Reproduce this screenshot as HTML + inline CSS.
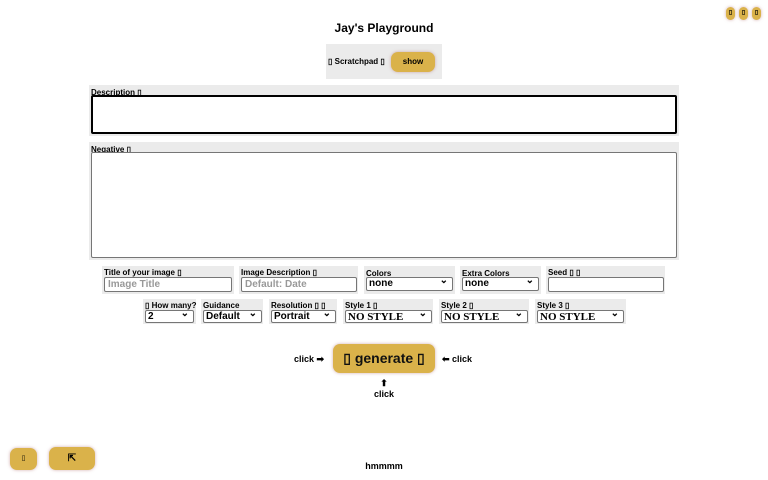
<!DOCTYPE html>
<html><head><meta charset="utf-8"><style>
*{box-sizing:border-box;margin:0;padding:0}
body{width:768px;height:480px;background:#fff;font-family:"Liberation Sans",sans-serif;color:#000;position:relative;overflow:hidden}
.a{position:absolute}
.g{background:#ebebeb}
.btn{background:#dab24a;border-radius:7px;box-shadow:0 0 3px rgba(180,120,120,.6);text-align:center;font-weight:bold}
.lbl{font-size:8px;font-weight:bold;position:absolute;left:2px;top:2px;white-space:nowrap}
.inp{position:absolute;background:#fff;border:1px solid #767676;border-radius:2px;font-size:10px;font-weight:bold;color:#999;padding-left:3px;line-height:13px}
.sel{position:absolute;background:#fff;border:1px solid #767676;border-radius:2px;font-size:10px;font-weight:bold;padding-left:2px;line-height:12px}
.sel:after{content:"⌄";position:absolute;right:4px;top:-3px;font-size:10px}
.ser{font-family:"Liberation Serif",serif;font-size:11px}
</style></head><body>
<div class="a" style="left:0;width:768px;top:21px;text-align:center;font-size:12px;font-weight:bold">Jay's Playground</div>
<div class="a btn" style="left:726px;top:7px;width:9px;height:13px;font-size:6px;line-height:13px;border-radius:5px">▯</div>
<div class="a btn" style="left:739px;top:7px;width:9px;height:13px;font-size:6px;line-height:13px;border-radius:5px">▯</div>
<div class="a btn" style="left:752px;top:7px;width:9px;height:13px;font-size:6px;line-height:13px;border-radius:5px">▯</div>
<div class="a g" style="left:326px;top:44px;width:116px;height:35px"></div>
<div class="a" style="left:328px;top:57px;font-size:8px;font-weight:bold">▯ Scratchpad ▯</div>
<div class="a btn" style="left:391px;top:52px;width:44px;height:20px;font-size:8px;line-height:20px">show</div>

<div class="a g" style="left:89px;top:85px;width:590px;height:51px"><span class="lbl" style="top:3px">Description ▯</span></div>
<div class="a" style="left:91px;top:95px;width:586px;height:39px;background:#fff;border:2px solid #000;border-radius:2px"></div>
<div class="a g" style="left:89px;top:142px;width:590px;height:118px"><span class="lbl" style="top:3px">Negative ▯</span></div>
<div class="a" style="left:91px;top:152px;width:586px;height:106px;background:#fff;border:1px solid #767676;border-radius:2px"></div>

<div class="a g" style="left:102px;top:266px;width:132px;height:28px"><span class="lbl">Title of your image ▯</span></div>
<div class="inp" style="left:104px;top:277px;width:128px;height:15px">Image Title</div>
<div class="a g" style="left:239px;top:266px;width:119px;height:28px"><span class="lbl">Image Description ▯</span></div>
<div class="inp" style="left:241px;top:277px;width:116px;height:15px">Default: Date</div>
<div class="a g" style="left:364px;top:266px;width:91px;height:28px"><span class="lbl" style="top:3px">Colors</span></div>
<div class="sel" style="left:366px;top:277px;width:87px;height:14px">none</div>
<div class="a g" style="left:460px;top:266px;width:81px;height:28px"><span class="lbl" style="top:3px">Extra Colors</span></div>
<div class="sel" style="left:462px;top:277px;width:77px;height:14px">none</div>
<div class="a g" style="left:546px;top:266px;width:119px;height:28px"><span class="lbl">Seed ▯ ▯</span></div>
<div class="inp" style="left:548px;top:277px;width:116px;height:15px"></div>

<div class="a g" style="left:143px;top:299px;width:53px;height:25px"><span class="lbl">▯ How many?</span></div>
<div class="sel" style="left:145px;top:310px;width:49px;height:13px">2</div>
<div class="a g" style="left:201px;top:299px;width:62px;height:25px"><span class="lbl">Guidance</span></div>
<div class="sel" style="left:203px;top:310px;width:59px;height:13px">Default</div>
<div class="a g" style="left:269px;top:299px;width:68px;height:25px"><span class="lbl">Resolution ▯ ▯</span></div>
<div class="sel" style="left:271px;top:310px;width:65px;height:13px">Portrait</div>
<div class="a g" style="left:343px;top:299px;width:90px;height:25px"><span class="lbl">Style 1 ▯</span></div>
<div class="sel ser" style="left:345px;top:310px;width:87px;height:13px">NO STYLE</div>
<div class="a g" style="left:439px;top:299px;width:90px;height:25px"><span class="lbl">Style 2 ▯</span></div>
<div class="sel ser" style="left:441px;top:310px;width:87px;height:13px">NO STYLE</div>
<div class="a g" style="left:535px;top:299px;width:91px;height:25px"><span class="lbl">Style 3 ▯</span></div>
<div class="sel ser" style="left:537px;top:310px;width:87px;height:13px">NO STYLE</div>

<div class="a" style="left:294px;top:354px;font-size:9px;font-weight:bold">click ➡</div>
<div class="a btn" style="left:333px;top:344px;width:102px;height:29px;font-size:14px;line-height:29px;color:#111">▯ generate ▯</div>
<div class="a" style="left:442px;top:354px;font-size:9px;font-weight:bold">⬅ click</div>
<div class="a" style="left:0;width:768px;top:378px;text-align:center;font-size:9px;font-weight:bold;line-height:11px">⬆<br>click</div>

<div class="a btn" style="left:10px;top:448px;width:27px;height:22px;font-size:7px;line-height:22px;font-weight:normal">▯</div>
<div class="a btn" style="left:49px;top:447px;width:46px;height:23px;font-size:10px;line-height:23px">⇱</div>
<div class="a" style="left:0;width:768px;top:461px;text-align:center;font-size:9px;font-weight:bold">hmmmm</div>
</body></html>
